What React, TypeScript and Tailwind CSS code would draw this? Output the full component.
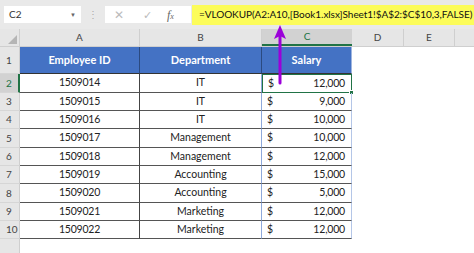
import React from "react";

const rows = [
  ["1509014", "IT", "12,000"],
  ["1509015", "IT", "9,000"],
  ["1509016", "IT", "10,000"],
  ["1509017", "Management", "10,000"],
  ["1509018", "Management", "12,000"],
  ["1509019", "Accounting", "15,000"],
  ["1509020", "Accounting", "5,000"],
  ["1509021", "Marketing", "12,000"],
  ["1509022", "Marketing", "12,000"],
];

const heights = ["h-[19px]", "h-[18px]", "h-[18px]", "h-[19px]", "h-[18px]", "h-[18px]", "h-[19px]", "h-[18px]", "h-[18px]"];

const font = { fontFamily: "Lato, 'Open Sans', sans-serif" };

export default function App() {
  return (
    <div className="relative w-[474px] h-[253px] overflow-hidden bg-white text-[#222]" style={font}>
      {/* formula bar */}
      <div className="h-[29px] bg-[#e9e9e9] flex items-center">
        <div className="ml-[4px] w-[77px] h-[17px] bg-white flex items-center justify-between pl-[5px] pr-[5px] text-[10px] text-[#333]">
          <span>C2</span>
          <span className="text-[6px] text-[#666]">▼</span>
        </div>
        <div className="w-[24px] flex justify-center text-[10px] text-[#aaa]">⋮</div>
        <div className="w-[86px] h-[17px] bg-white flex items-center text-[#bbb]">
          <span className="ml-[9px] text-[12px] leading-none">✕</span>
          <span className="ml-[19px] text-[11px] leading-none">✓</span>
          <span className="ml-[15px] text-[12px] italic text-[#666]" style={{ fontFamily: "'Liberation Serif', serif" }}>
            f<span className="text-[8px]">x</span>
          </span>
        </div>
        <div className="ml-[1px] flex-1 h-[20px] bg-[#fcfc5a] flex items-center pl-[7px] text-[10px] tracking-[-0.06px] text-[#111] whitespace-nowrap">
          =VLOOKUP(A2:A10,[Book1.xlsx]Sheet1!$A$2:$C$10,3,FALSE)
        </div>
      </div>

      {/* column headers */}
      <div className="flex h-[18px] bg-[#e6e6e6] text-[10px] text-[#444] border-b border-[#cfcfcf]">
        <div className="w-[20px] relative border-r border-[#cfcfcf]">
          <div className="absolute right-[2px] bottom-[2px] w-0 h-0 border-l-[9px] border-l-transparent border-b-[9px] border-b-[#b5b5b5]" />
        </div>
        <div className="w-[120px] flex items-center justify-center border-r border-[#cfcfcf]">A</div>
        <div className="w-[122px] flex items-center justify-center border-r border-[#cfcfcf]">B</div>
        <div className="w-[90px] flex items-center justify-center bg-[#d2d2d2] border-b-2 border-[#217346] text-[#217346]">C</div>
        <div className="w-[52px] flex items-center justify-center border-r border-[#cfcfcf]">D</div>
        <div className="w-[51px] flex items-center justify-center border-r border-[#cfcfcf]">E</div>
        <div className="flex-1" />
      </div>

      {/* header row */}
      <div className="flex h-[27px]">
        <div className="w-[20px] bg-[#e6e6e6] border-r border-[#cfcfcf] border-b border-b-[#d6d6d6] text-[10px] text-[#444] flex items-center pl-[6px]">1</div>
        <div className="w-[120px] bg-[#4472c4] text-white font-bold text-[11px] flex items-center justify-center border-r border-[#2b4a80] border-b border-b-[#333]">Employee ID</div>
        <div className="w-[122px] bg-[#4472c4] text-white font-bold text-[11px] flex items-center justify-center border-r border-[#2b4a80] border-b border-b-[#333]">Department</div>
        <div className="w-[90px] bg-[#4472c4] text-white font-bold text-[11px] flex items-center justify-center border-r border-[#9fb6e0] border-b border-b-[#333]">Salary</div>
      </div>

      {/* data rows */}
      {rows.map((r, i) => (
        <div key={i} className={`flex ${heights[i]}`}>
          <div
            className={`w-[20px] text-[10px] flex items-center pl-[6px] border-b border-b-[#d6d6d6] ${
              i === 0 ? "bg-[#d2d2d2] text-[#217346] border-r-2 border-r-[#217346]" : "bg-[#e6e6e6] text-[#444] border-r border-r-[#cfcfcf]"
            } ${i === 8 ? "pl-[3px]" : ""}`}
          >
            {i + 2}
          </div>
          <div className="w-[120px] text-[10.5px] tracking-[-0.2px] flex items-center justify-center border-r border-[#444] border-b border-b-[#555]">{r[0]}</div>
          <div className="w-[122px] text-[10.5px] flex items-center justify-center border-r border-[#8ea9db] border-b border-b-[#555]">{r[1]}</div>
          <div
            className={`relative w-[90px] text-[10.5px] tracking-[-0.2px] flex items-center justify-between pl-[5px] pr-[6px] ${
              i === 0 ? "border border-[#217346]" : "border-r border-[#b4c6e7] border-b border-b-[#555]"
            }`}
          >
            <span>$</span>
            <span>{r[2]}</span>
            {i === 0 && <div className="absolute right-[-3px] bottom-[-3px] w-[5px] h-[5px] bg-[#217346] border border-white" />}
          </div>
        </div>
      ))}

      {/* row 11 */}
      <div className="flex h-[20px]">
        <div className="w-[20px] bg-[#e6e6e6] border-r border-[#cfcfcf]" />
      </div>

      {/* purple arrow */}
      <svg className="absolute left-[272px] top-[24px]" width="16" height="62" viewBox="0 0 16 62">
        <line x1="8" y1="10" x2="8" y2="59" stroke="#9b00d9" strokeWidth="3" strokeLinecap="round" />
        <polygon points="8,1 14,15 8,12 2,15" fill="#9b00d9" />
      </svg>
    </div>
  );
}
